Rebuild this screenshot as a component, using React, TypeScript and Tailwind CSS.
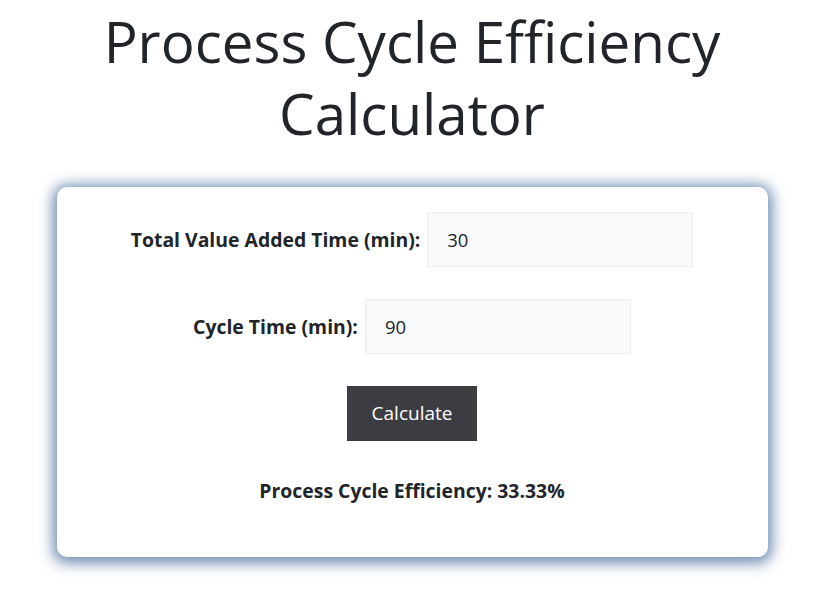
import React, { useState } from 'react';

const App: React.FC = () => {
  const [valueAdded, setValueAdded] = useState('30');
  const [cycle, setCycle] = useState('90');
  const [result, setResult] = useState('33.33%');

  const calculate = () => {
    const v = parseFloat(valueAdded);
    const c = parseFloat(cycle);
    if (!isNaN(v) && !isNaN(c) && c !== 0) setResult(((v / c) * 100).toFixed(2) + '%');
  };

  return (
    <div className="min-h-[593px] bg-white font-['Open_Sans',sans-serif] text-[#212529] flex flex-col items-center">
      <h1 className="text-[56.5px] leading-[72px] font-normal text-center mt-[6px] w-[660px]">
        Process Cycle Efficiency Calculator
      </h1>

      <div className="mt-[37px] w-[711px] h-[370px] bg-white rounded-[10px] shadow-[0_2px_14px_4px_rgba(60,100,150,0.75)] flex flex-col items-center pt-[25px]">
        <div className="flex items-center gap-[7px]">
          <label className="text-[19.4px] font-bold">Total Value Added Time (min):</label>
          <input
            value={valueAdded}
            onChange={(e) => setValueAdded(e.target.value)}
            className="w-[266px] h-[55px] bg-[#f8f9fa] border border-[#eceef0] px-[19px] text-[18.5px] outline-none"
          />
        </div>

        <div className="flex items-center gap-[7px] mt-[32px]">
          <label className="text-[19.4px] font-bold">Cycle Time (min):</label>
          <input
            value={cycle}
            onChange={(e) => setCycle(e.target.value)}
            className="w-[266px] h-[55px] bg-[#f8f9fa] border border-[#eceef0] px-[19px] text-[18.5px] outline-none"
          />
        </div>

        <button
          onClick={calculate}
          className="mt-[32px] w-[130px] h-[55px] bg-[#3c3d43] text-white text-[19px] cursor-pointer"
        >
          Calculate
        </button>

        <p className="mt-[35px] text-[19.4px] font-bold">Process Cycle Efficiency: {result}</p>
      </div>
    </div>
  );
};

export default App;
